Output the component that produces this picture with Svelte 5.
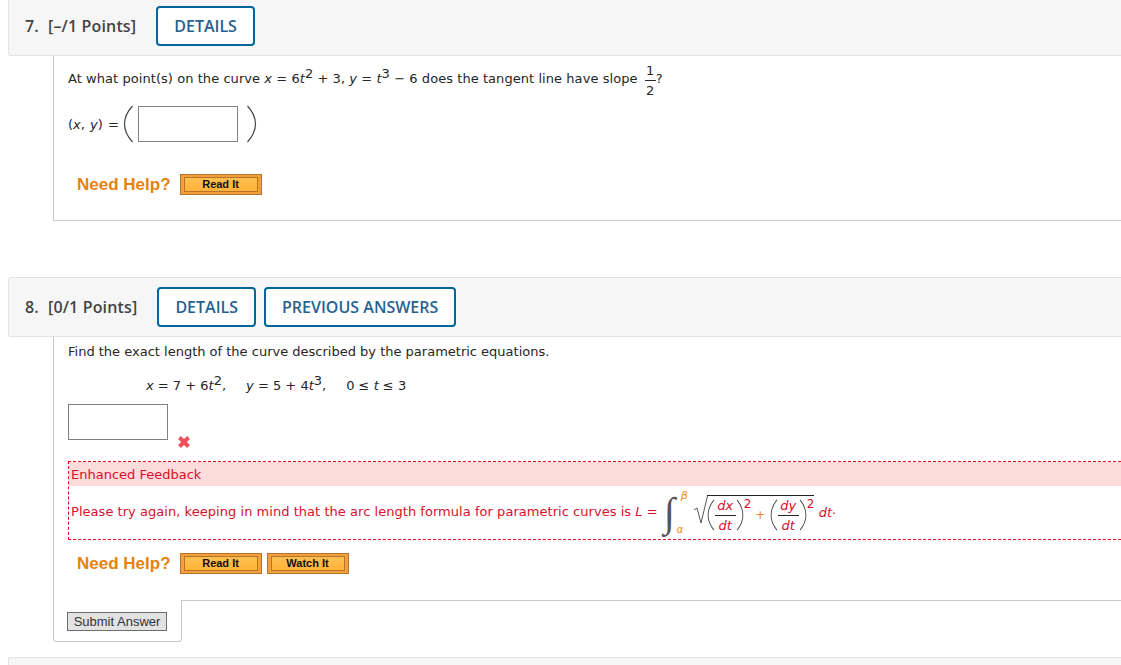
<script>
	const helpLinks = ["Read It", "Watch It"];
</script>

{#snippet lparen(w, h)}
	<svg class="paren" width={w} height={h} viewBox="0 0 11 38" preserveAspectRatio="none"><path d="M9.5 1 C4 7 1.5 13 1.5 19 C1.5 25 4 31 9.5 37" /></svg>
{/snippet}
{#snippet rparen(w, h)}
	<svg class="paren" width={w} height={h} viewBox="0 0 11 38" preserveAspectRatio="none"><path d="M1.5 1 C7 7 9.5 13 9.5 19 C9.5 25 7 31 1.5 37" /></svg>
{/snippet}
{#snippet help(links)}
	<div class="help">
		<span class="need">Need Help?</span>
		{#each links as link}
			<button class="orange"><span>{link}</span></button>
		{/each}
	</div>
{/snippet}

<div class="page">
	<!-- questao 7 -->
	<section class="question first">
		<header class="head">
			<span class="num">7.</span>
			<span class="points">[–/1 Points]</span>
			<button class="tab">DETAILS</button>
		</header>
		<div class="body closed">
			<p class="prompt">At what point(s) on the curve <i>x</i> = 6<i>t</i><sup>2</sup> + 3, <i>y</i> = <i>t</i><sup>3</sup> − 6 does the tangent line have slope <span class="frac"><span class="top">1</span><span>2</span></span>?</p>
			<div class="answer">
				<span class="xy">(<i>x</i>, <i>y</i>) =</span>
				{@render lparen(11, 38)}
				<input class="box" type="text" />
				{@render rparen(11, 38)}
			</div>
			{@render help(helpLinks.slice(0, 1))}
		</div>
	</section>

	<!-- questao 8 -->
	<section class="question second">
		<header class="head">
			<span class="num">8.</span>
			<span class="points">[0/1 Points]</span>
			<button class="tab">DETAILS</button>
			<button class="tab">PREVIOUS ANSWERS</button>
		</header>
		<div class="body open">
			<p class="find">Find the exact length of the curve described by the parametric equations.</p>
			<p class="eq"><i>x</i> = 7 + 6<i>t</i><sup>2</sup>,<span class="sp"></span><i>y</i> = 5 + 4<i>t</i><sup>3</sup>,<span class="sp"></span>0 ≤ <i>t</i> ≤ 3</p>
			<div class="wrong">
				<input class="box" type="text" />
				<svg class="cross" width="14" height="14" viewBox="0 0 14 14"><path d="M2.5 2.5 L11.5 11.5 M11.5 2.5 L2.5 11.5" /></svg>
			</div>
			<div class="feedback">
				<div class="fb-title">Enhanced Feedback</div>
				<div class="fb-text">
					<span class="fb-line">Please try again, keeping in mind that the arc length formula for parametric curves is <i>L</i> =</span>
					<span class="integral"><span class="int">∫</span><i class="lim-top">β</i><i class="lim-bot">α</i></span>
					<svg class="radical" width="15" height="30" viewBox="0 0 15 30"><path d="M1 15 L4 13 L8 28 L14.5 1" /></svg>
					<span class="radicand">
						{@render lparen(8, 32)}
						<span class="frac wide"><span class="top"><i>dx</i></span><span><i>dt</i></span></span>
						{@render rparen(8, 32)}
						<span class="sq">2</span>
						<span class="plus">+</span>
						{@render lparen(8, 32)}
						<span class="frac wide"><span class="top"><i>dy</i></span><span><i>dt</i></span></span>
						{@render rparen(8, 32)}
						<span class="sq">2</span>
					</span>
					<span class="dt"><i>dt</i><span class="dot">.</span></span>
				</div>
			</div>
			{@render help(helpLinks)}
		</div>
		<div class="foot">
			<div class="submit-tab"><button class="submit">Submit Answer</button></div>
			<div class="rest"></div>
		</div>
	</section>

	<!-- proxima questao, cortada -->
	<section class="question third">
		<header class="head"></header>
	</section>
</div>

<style>
	:global(body) {
		overflow: hidden;
	}

	.page {
		width: 1121px;
		height: 665px;
		overflow: hidden;
		background: #fff;
		color: #262626;
		font-family: "DejaVu Sans", Verdana, sans-serif;
		font-size: 13px;
	}

	.question {
		margin: 0 -20px 0 8px;
	}
	.first {
		margin-top: -4px;
	}
	.second {
		margin-top: 56px;
	}
	.third {
		margin-top: 15px;
	}

	/* Cabecalho da questao */
	.head {
		display: flex;
		align-items: center;
		height: 60px;
		box-sizing: border-box;
		padding-left: 16px;
		background: #f6f6f6;
		border: 1px solid #e3e3e3;
		border-radius: 2px;
		color: #444;
		font-family: "Open Sans", sans-serif;
		font-size: 16px;
		font-weight: 600;
		letter-spacing: 0.15px;
	}
	.num {
		width: 23px;
	}
	.points {
		margin-right: 20px;
	}
	.tab {
		height: 40px;
		margin-right: 8px;
		padding: 0 16px;
		background: #fff;
		border: 2px solid #00669c;
		border-radius: 4px;
		color: #27628f;
		font-family: "Open Sans", sans-serif;
		font-size: 16px;
		font-weight: 600;
	}

	/* Corpo da questao */
	.body {
		margin-left: 45px;
		padding-left: 14px;
		border-left: 1px solid #c8c8c8;
	}
	.closed {
		height: 165px;
		box-sizing: border-box;
		border-bottom: 1px solid #c8c8c8;
	}
	.open {
		padding-bottom: 26px;
	}

	p {
		margin: 0;
	}
	sup {
		font-size: 13px;
		line-height: 0;
	}
	.prompt {
		height: 45px;
		padding-top: 8px;
		box-sizing: border-box;
		line-height: 30px;
		letter-spacing: 0.06px;
		white-space: nowrap;
	}
	.frac {
		display: inline-flex;
		flex-direction: column;
		align-items: center;
		vertical-align: middle;
		line-height: 19px;
	}
	.prompt .frac {
		position: relative;
		top: 1px;
		min-width: 11px;
		margin: -10px 0 -10px 3px;
	}
	.frac .top {
		align-self: stretch;
		text-align: center;
		border-bottom: 1px solid #262626;
	}

	.answer {
		display: flex;
		align-items: center;
		margin-top: 4px;
		height: 38px;
	}
	.xy {
		width: 55px;
		word-spacing: 1px;
	}
	.answer .box {
		margin: 0 8px 0 4px;
	}
	.box {
		width: 100px;
		height: 36px;
		box-sizing: border-box;
		padding: 0;
		background: #fff;
		border: 1px solid #808080;
	}
	.paren {
		flex: none;
	}
	.paren path {
		fill: none;
		stroke: #444;
		stroke-width: 1.2;
	}

	.help {
		display: flex;
		align-items: center;
		gap: 5px;
		margin-left: 9px;
	}
	.closed .help {
		margin-top: 31px;
	}
	.open .help {
		margin-top: 13px;
	}
	.need {
		margin-right: 4px;
		color: #e8820f;
		font-family: "Liberation Sans", Arial, sans-serif;
		font-size: 17px;
		font-weight: 700;
	}
	.orange {
		width: 82px;
		height: 21px;
		padding: 3px;
		background: #f2a03c;
		border: 1px solid #b9722a;
		color: #111;
		font-family: "Liberation Sans", Arial, sans-serif;
		font-size: 11px;
		font-weight: 700;
	}
	.orange span {
		display: block;
		height: 13px;
		margin: -1px 0;
		background: linear-gradient(#ffc04f, #ffb339);
		border: 1px solid #b9722a;
		line-height: 13px;
	}

	.find {
		padding-top: 7px;
		line-height: 16px;
	}
	.eq {
		padding: 14px 0 0 78px;
		line-height: 24px;
		white-space: pre;
	}
	.sp {
		display: inline-block;
		width: 20px;
	}
	.wrong {
		display: flex;
		align-items: flex-end;
		gap: 9px;
		margin-top: 6px;
		height: 44px;
	}
	.wrong .box {
		align-self: flex-start;
	}
	.cross {
		margin-bottom: -1px;
	}
	.cross path {
		fill: none;
		stroke: #f0505a;
		stroke-width: 4;
	}

	.feedback {
		height: 79px;
		margin-top: 13px;
		box-sizing: border-box;
		border: 1px dashed #e8001c;
		border-right: 0;
		color: #d8102c;
	}
	.fb-title {
		height: 24px;
		padding-left: 2px;
		background: #ffdcdc;
		line-height: 26px;
	}
	.fb-text {
		display: flex;
		align-items: center;
		height: 52px;
		padding-left: 2px;
		white-space: nowrap;
	}
	.fb-line {
		margin-top: -2px;
		letter-spacing: 0.04px;
	}
	.integral {
		position: relative;
		width: 30px;
		height: 40px;
		margin-left: 5px;
	}
	.int {
		position: absolute;
		left: 1px;
		top: -5px;
		color: #555;
		font-family: "Liberation Serif", serif;
		font-size: 41px;
		font-style: italic;
		line-height: 50px;
	}
	.lim-top {
		position: absolute;
		left: 18px;
		top: -3px;
		color: #ef8a1a;
		font-size: 11px;
	}
	.lim-bot {
		position: absolute;
		left: 14px;
		bottom: -3px;
		color: #ef8a1a;
		font-size: 10px;
	}
	.radical {
		flex: none;
		margin-bottom: 4px;
	}
	.radical path {
		fill: none;
		stroke: #555;
		stroke-width: 1;
	}
	.radicand {
		display: flex;
		align-items: center;
		height: 37px;
		margin: 4px 0 0 -1px;
		border-top: 1px solid #222;
	}
	.wide {
		width: 21px;
		margin-top: 2px;
	}
	.sq {
		align-self: flex-start;
		width: 7px;
		margin-top: 1px;
		font-size: 12px;
		line-height: 14px;
	}
	.plus {
		width: 19px;
		color: #ef8a1a;
		font-size: 12px;
		text-align: center;
	}
	.dt {
		margin-left: 5px;
	}
	.dot {
		position: relative;
		top: -3px;
	}

	/* Aba do botao de enviar */
	.foot {
		display: flex;
		margin-left: 45px;
	}
	.submit-tab {
		width: 129px;
		height: 42px;
		box-sizing: border-box;
		padding: 12px 0 0 13px;
		border: 1px solid #c8c8c8;
		border-top: 0;
		border-radius: 0 0 4px 4px;
	}
	.rest {
		flex: 1;
		border-top: 1px solid #c8c8c8;
	}
	.submit {
		display: block;
		width: 100px;
		height: 19px;
		padding: 0;
		background: #e2e2e2;
		border: 1px solid #6e6e6e;
		color: #333;
		font-family: "Liberation Sans", Arial, sans-serif;
		font-size: 13px;
	}
</style>
